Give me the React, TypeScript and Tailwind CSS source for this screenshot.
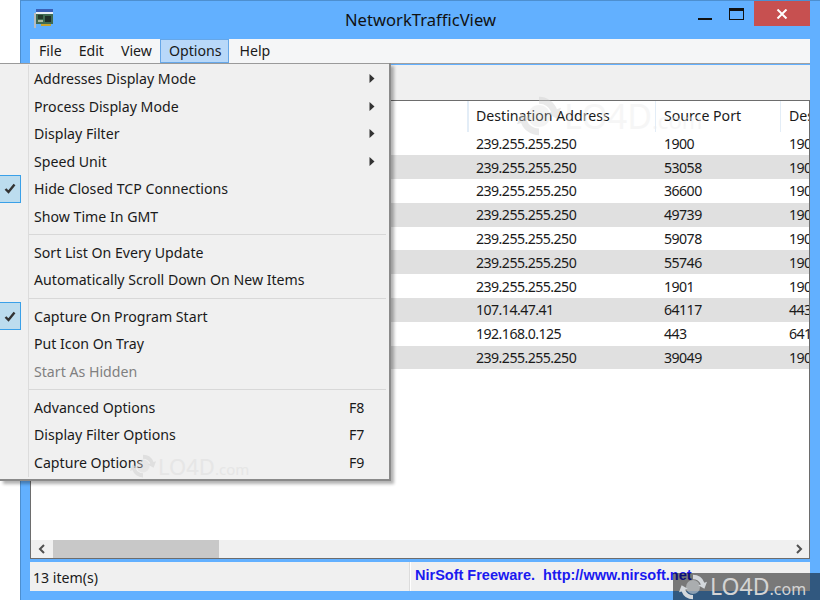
import React from "react";

const rows = [
  ["239.255.255.250", "1900", "1900"],
  ["239.255.255.250", "53058", "1900"],
  ["239.255.255.250", "36600", "1900"],
  ["239.255.255.250", "49739", "1900"],
  ["239.255.255.250", "59078", "1900"],
  ["239.255.255.250", "55746", "1900"],
  ["239.255.255.250", "1901", "1900"],
  ["107.14.47.41", "64117", "443"],
  ["192.168.0.125", "443", "64117"],
  ["239.255.255.250", "39049", "1900"],
];

type Item = { t: string; arrow?: boolean; check?: boolean; key?: string; off?: boolean; sep?: boolean };
const items: Item[] = [
  { t: "Addresses Display Mode", arrow: true },
  { t: "Process Display Mode", arrow: true },
  { t: "Display Filter", arrow: true },
  { t: "Speed Unit", arrow: true },
  { t: "Hide Closed TCP Connections", check: true },
  { t: "Show Time In GMT" },
  { t: "", sep: true },
  { t: "Sort List On Every Update" },
  { t: "Automatically Scroll Down On New Items" },
  { t: "", sep: true },
  { t: "Capture On Program Start", check: true },
  { t: "Put Icon On Tray" },
  { t: "Start As Hidden", off: true },
  { t: "", sep: true },
  { t: "Advanced Options", key: "F8" },
  { t: "Display Filter Options", key: "F7" },
  { t: "Capture Options", key: "F9" },
];

function Globe({ s, c }: { s: number; c: string }) {
  return (
    <svg width={s} height={s} viewBox="0 0 32 32" fill="none">
      <path d="M16 2a14 14 0 0 1 13 9l3-1-3 8-7-4 3-1a10 10 0 0 0-9-6z" fill={c} />
      <path d="M16 30A14 14 0 0 1 3 21l-3 1 3-8 7 4-3 1a10 10 0 0 0 9 6z" fill={c} />
      <circle cx="16" cy="16" r="8" fill={c} opacity="0.55" />
    </svg>
  );
}

export default function App() {
  return (
    <div className="relative h-[600px] w-[820px] overflow-hidden bg-white font-['Noto_Sans',sans-serif] text-[14.15px] text-[#1a1a1a]">
      <div className="ml-[20px] flex h-[600px] flex-col border-t border-l border-[#4d8fd0] bg-[#62b0ff] pr-[10px] pb-[9px] pl-[9px]">
        <div className="flex h-[38px] shrink-0 items-start">
          <svg className="mt-[8px] ml-[3px] shrink-0" width="20" height="20" viewBox="0 0 20 20">
            <rect x="3" y="0" width="17" height="3" fill="#3a5fb5" />
            <rect x="3" y="3" width="17" height="2" fill="#e8eef5" />
            <rect x="3" y="5" width="17" height="10" fill="#3f6b52" />
            <rect x="5" y="6" width="5" height="4" fill="#243a2c" />
            <rect x="12" y="7" width="6" height="6" fill="#1f2f28" />
            <rect x="5" y="11" width="5" height="2" fill="#a9b89a" />
            <rect x="8" y="15" width="10" height="2" fill="#c9a52e" />
            <rect x="1" y="4" width="2" height="15" fill="#b8bcc0" />
          </svg>
          <div className="mt-[7px] flex-1 pl-[292px] text-left text-[16.6px] leading-[23px] text-[#111]">NetworkTrafficView</div>
          <div className="flex items-start">
            <div className="mt-[17px] mr-[17px] h-[2px] w-[14px] bg-[#111]" />
            <div className="mt-[7px] mr-[10px] h-[12px] w-[15px] border border-t-[3px] border-[#111]" />
            <div className="flex h-[25px] w-[56px] items-center justify-center bg-[#c75050]">
              <svg width="12" height="10" viewBox="0 0 12 10">
                <path d="M1.5 0.5 L10.5 9.5 M10.5 0.5 L1.5 9.5" stroke="#fff" strokeWidth="2" />
              </svg>
            </div>
          </div>
        </div>

        <div className="flex h-[25px] shrink-0 items-center border-b border-[#a0a0a0] bg-[#f5f6f7] pl-[1px]">
          <div className="pr-[8px] pl-[8px]">File</div>
          <div className="pr-[8px] pl-[9px]">Edit</div>
          <div className="pr-[8px] pl-[9px]">View</div>
          <div className="flex h-[24px] items-center border border-[#66a7e8] bg-[#b8d8f9] pr-[7px] pl-[8px]">Options</div>
          <div className="px-[10px]">Help</div>
        </div>

        <div className="mt-[1px] h-[35px] shrink-0 bg-[#f0f0f0]" />

        <div className="flex min-h-0 flex-1 flex-col overflow-hidden border border-[#6d6d6d] bg-white">
          <div className="flex h-[30.5px] shrink-0 items-center">
            <div className="h-full w-[437px] shrink-0 border-r border-[#e3edf7]" />
            <div className="flex h-full w-[188px] shrink-0 items-center border-r border-l border-[#e3edf7] pb-[1px] pl-[7px]">Destination Address</div>
            <div className="flex h-full w-[125px] shrink-0 items-center border-r border-[#e3edf7] pb-[1px] pl-[8px]">Source Port</div>
            <div className="pb-[1px] pl-[8px] whitespace-nowrap">Dest Port</div>
          </div>
          {rows.map((r, i) => (
            <div key={i} className={`flex h-[23.8px] shrink-0 items-center tracking-[-0.55px] whitespace-nowrap ${i % 2 === 1 ? "bg-[#e0e0e0]" : "bg-white"}`}>
              <div className="w-[445px] shrink-0" />
              <div className="w-[188px] shrink-0">{r[0]}</div>
              <div className="w-[125px] shrink-0">{r[1]}</div>
              <div>{r[2]}</div>
            </div>
          ))}
          <div className="flex-1" />
          <div className="flex h-[18px] shrink-0 items-center justify-between bg-[#f0f0f0]">
            <div className="flex h-full">
              <div className="flex w-[22px] items-center justify-center">
                <svg width="8" height="10" viewBox="0 0 8 10"><path d="M6 1 L2 5 L6 9" stroke="#505050" strokeWidth="2" fill="none" /></svg>
              </div>
              <div className="h-full w-[166px] bg-[#c8c8c8]" />
            </div>
            <div className="flex w-[20px] items-center justify-center">
              <svg width="8" height="10" viewBox="0 0 8 10"><path d="M2 1 L6 5 L2 9" stroke="#505050" strokeWidth="2" fill="none" /></svg>
            </div>
          </div>
        </div>

        <div className="mt-[3px] flex h-[29px] shrink-0 bg-[#f0f0f0]">
          <div className="flex w-[380px] shrink-0 items-center border-r border-[#dcdcdc] pt-[3px] pl-[3px]">13 item(s)</div>
          <div className="flex items-center border-l border-white pb-[1px] pl-[4px] font-['Liberation_Sans',sans-serif] text-[14.5px] font-bold whitespace-pre text-[#1a1af0]">
            NirSoft Freeware.  http://www.nirsoft.net
          </div>
        </div>
      </div>

      <div className="absolute top-[63px] left-0 flex h-[418px] w-[391px] flex-col border-r-2 border-b-2 border-[#8a8a8a] bg-[#f0f0f0] pt-[2px] shadow-[3px_3px_3px_rgba(0,0,0,0.3)] before:absolute before:top-0 before:left-0 before:h-[1px] before:w-full before:bg-[#9a9a9a] before:content-['']">
        <div className="absolute top-[2px] bottom-[2px] left-[28px] w-[1px] bg-[#dcdcdc]" />
        {items.map((it, i) =>
          it.sep ? (
            <div key={i} className="flex h-[8.7px] shrink-0 items-center pr-[3px] pl-[29px]">
              <div className="h-[1px] w-full bg-[#d8d8d8]" />
            </div>
          ) : (
            <div key={i} className={`relative flex h-[27.5px] shrink-0 items-center pl-[34px] ${it.off ? "text-[#808080]" : ""}`}>
              {it.check && (
                <div className="absolute top-0 left-0 flex h-[27.5px] w-[21px] items-center justify-center border-y border-r border-[#3aa0e8] bg-[#bcdcee]">
                  <svg width="12" height="11" viewBox="0 0 12 11"><path d="M1.5 6 L4.5 9 L10.5 1.5" stroke="#333" strokeWidth="2.4" fill="none" /></svg>
                </div>
              )}
              <span>{it.t}</span>
              {it.arrow && (
                <svg className="absolute left-[369px]" width="6" height="9" viewBox="0 0 6 9"><path d="M0.5 0 L5.5 4.5 L0.5 9 Z" fill="#333" /></svg>
              )}
              {it.key && <span className="absolute left-[349px]">{it.key}</span>}
            </div>
          )
        )}
        <div className="absolute top-[390px] left-[130px] flex items-center gap-[2px] opacity-70">
          <Globe s={26} c="#d8d8d8" />
          <span className="text-[22px] leading-none text-[#e2e2e2]">LO4D<span className="text-[15px]">.com</span></span>
        </div>
      </div>

      <div className="absolute top-[94px] left-[517px] flex items-center gap-[3px] opacity-45">
        <Globe s={44} c="#cfcfcf" />
        <span className="text-[34px] leading-none text-[#ececec]">LO4D<span className="text-[22px]">.com</span></span>
      </div>

      <div className="absolute top-[573px] left-[673px] flex h-[27px] w-[147px] items-center gap-[3px] bg-black/50 pl-[6px] text-[#d4d4d4]">
        <Globe s={28} c="#d4d8dc" />
        <span className="text-[23px] leading-none">LO4D<span className="text-[16px]">.com</span></span>
      </div>
    </div>
  );
}
